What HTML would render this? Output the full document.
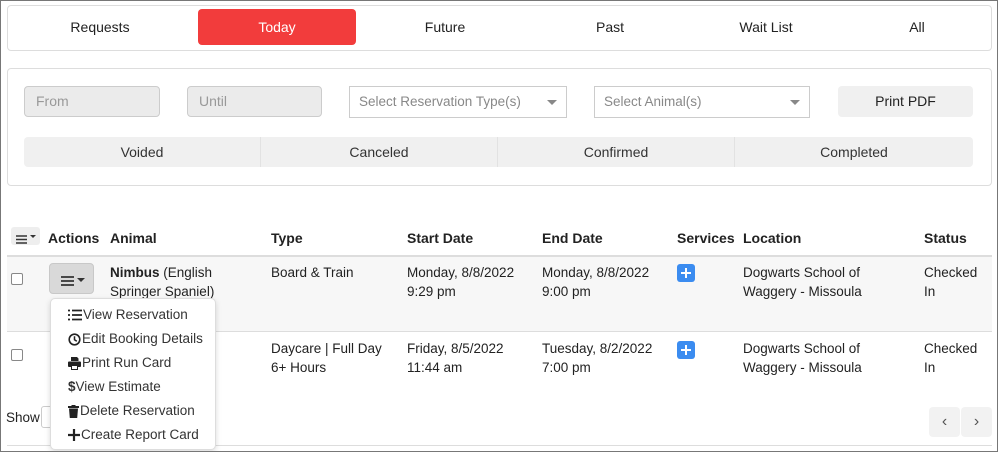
<!DOCTYPE html>
<html><head><style>
*{box-sizing:border-box;margin:0;padding:0}
body{width:998px;height:452px;overflow:hidden;background:#fff;font-family:"Liberation Sans",sans-serif;font-size:13.5px;color:#222;position:relative}
.frame{position:absolute;left:0;top:0;width:998px;height:452px;border:1px solid #777;pointer-events:none;z-index:9}
.a{position:absolute}
.card{position:absolute;border:1px solid #ddd;border-radius:4px;background:#fff}
.tab{position:absolute;top:9px;height:36px;line-height:36px;text-align:center;font-size:14px;color:#222}
.inp{position:absolute;top:86px;height:31px;border:1px solid #ccc;border-radius:4px;background:#ebebeb;color:#999;line-height:29px;padding-left:11px;font-size:14px}
.sel{position:absolute;top:86px;height:32px;border:1px solid #ccc;background:#fff;color:#888;line-height:30px;padding-left:9px;font-size:13.5px}
.sel:after{content:"";position:absolute;right:9px;top:13px;border-left:5px solid transparent;border-right:5px solid transparent;border-top:5px solid #888}
.seg{position:absolute;top:137px;height:30px;line-height:30px;text-align:center;background:#f0f0f0;font-size:14px;color:#333;border-right:1px solid #e2e2e2}
.th{position:absolute;top:230px;font-weight:bold;font-size:14px}
.td{position:absolute;line-height:19px;font-size:13.5px}
.cb{position:absolute;left:11px;width:12px;height:12px;border:1px solid #888;border-radius:2px;background:#fff}
.plus{position:absolute;left:677px;width:18px;height:18px;background:#3b8cf0;border-radius:3px}
.plus:before{content:"";position:absolute;left:4px;top:8px;width:10px;height:2px;background:#fff}
.plus:after{content:"";position:absolute;left:8px;top:4px;width:2px;height:10px;background:#fff}
.menu{position:absolute;left:50px;top:298px;width:166px;height:152px;background:#fff;border:1px solid #ddd;border-radius:5px;box-shadow:0 2px 6px rgba(0,0,0,.15);z-index:5}
.mi{position:absolute;left:17px;font-size:13.5px;color:#333;line-height:18px;display:flex;align-items:center}
.mi svg{margin-right:1px}
.car{display:inline-block;border-left:3px solid transparent;border-right:3px solid transparent;border-top:3px solid #333;vertical-align:middle;margin-left:2px}
</style></head><body>
<div class="frame"></div>
<div class="card" style="left:7px;top:5px;width:985px;height:46px"></div>
<div class="tab" style="left:30px;width:140px">Requests</div>
<div class="tab" style="left:198px;width:158px;background:#f23c3c;color:#fff;border-radius:4px">Today</div>
<div class="tab" style="left:375px;width:140px">Future</div>
<div class="tab" style="left:540px;width:140px">Past</div>
<div class="tab" style="left:696px;width:140px">Wait List</div>
<div class="tab" style="left:847px;width:140px">All</div>

<div class="card" style="left:7px;top:68px;width:985px;height:118px"></div>
<div class="inp" style="left:24px;width:136px">From</div>
<div class="inp" style="left:187px;width:135px">Until</div>
<div class="sel" style="left:349px;width:218px">Select Reservation Type(s)</div>
<div class="sel" style="left:594px;width:216px">Select Animal(s)</div>
<div class="a" style="left:838px;top:86px;width:135px;height:31px;background:#f0f0f0;border-radius:4px;text-align:center;line-height:31px;font-size:14px">Print PDF</div>
<div class="seg" style="left:24px;width:237px;border-radius:4px 0 0 4px">Voided</div>
<div class="seg" style="left:261px;width:237px">Canceled</div>
<div class="seg" style="left:498px;width:237px">Confirmed</div>
<div class="seg" style="left:735px;width:238px;border-radius:0 4px 4px 0;border-right:none">Completed</div>

<div class="a" style="left:11px;top:227px;width:29px;height:18px;background:#eee;border-radius:3px;padding:5px 0 0 5px"><svg width="12" height="9" viewBox="0 0 12 9"><path d="M0 1h11M0 4.5h11M0 8h11" stroke="#333" stroke-width="1.6"/></svg><span class="car" style="vertical-align:top;margin-top:3px"></span></div>
<div class="th" style="left:48px">Actions</div>
<div class="th" style="left:110px">Animal</div>
<div class="th" style="left:271px">Type</div>
<div class="th" style="left:407px">Start Date</div>
<div class="th" style="left:542px">End Date</div>
<div class="th" style="left:677px">Services</div>
<div class="th" style="left:743px">Location</div>
<div class="th" style="left:924px">Status</div>
<div class="a" style="left:7px;top:255px;width:985px;height:77px;background:#f7f7f7;border-top:2px solid #ddd;border-bottom:1px solid #ddd"></div>

<div class="cb" style="top:273px"></div>
<div class="a" style="left:49px;top:263px;width:45px;height:31px;background:#d9d9d9;border:1px solid #c8c8c8;border-radius:4px;padding:10px 0 0 11px"><svg width="14" height="10" viewBox="0 0 14 10"><path d="M0 1h13M0 5h13M0 9h13" stroke="#333" stroke-width="1.8"/></svg><span class="car" style="vertical-align:top;margin-top:4px;border-width:4px 4px 0 4px"></span></div>
<div class="td" style="left:110px;top:263px"><b>Nimbus</b> (English<br>Springer Spaniel)</div>
<div class="td" style="left:271px;top:263px">Board &amp; Train</div>
<div class="td" style="left:407px;top:263px">Monday, 8/8/2022<br>9:29 pm</div>
<div class="td" style="left:542px;top:263px">Monday, 8/8/2022<br>9:00 pm</div>
<div class="plus" style="top:264px"></div>
<div class="td" style="left:743px;top:263px">Dogwarts School of<br>Waggery - Missoula</div>
<div class="td" style="left:924px;top:263px">Checked<br>In</div>

<div class="cb" style="top:349px"></div>
<div class="td" style="left:271px;top:339px">Daycare | Full Day<br>6+ Hours</div>
<div class="td" style="left:407px;top:339px">Friday, 8/5/2022<br>11:44 am</div>
<div class="td" style="left:542px;top:339px">Tuesday, 8/2/2022<br>7:00 pm</div>
<div class="plus" style="top:341px"></div>
<div class="td" style="left:743px;top:339px">Dogwarts School of<br>Waggery - Missoula</div>
<div class="td" style="left:924px;top:339px">Checked<br>In</div>

<div class="td" style="left:6px;top:408px">Show</div>
<div class="a" style="left:41px;top:406px;width:14px;height:22px;border:1px solid #ccc;border-radius:3px"></div>
<div class="a" style="left:929px;top:407px;width:31px;height:30px;background:#f2f2f2;border-radius:4px;text-align:center;line-height:30px;color:#555;font-size:16px">‹</div>
<div class="a" style="left:961px;top:407px;width:31px;height:30px;background:#f2f2f2;border-radius:4px;text-align:center;line-height:30px;color:#555;font-size:16px">›</div>
<div class="a" style="left:7px;top:445px;width:985px;height:1px;background:#ddd"></div>

<div class="menu">
<div class="mi" style="top:7px"><svg width="14" height="12" viewBox="0 0 14 12"><path d="M0 1.5h2M0 6h2M0 10.5h2M4 1.5h10M4 6h10M4 10.5h10" stroke="#222" stroke-width="1.8"/></svg>View Reservation</div>
<div class="mi" style="top:31px"><svg width="13" height="13" viewBox="0 0 13 13"><circle cx="6.5" cy="6.5" r="5.3" fill="none" stroke="#222" stroke-width="1.6"/><path d="M6.5 3.2v3.5l2.3 1.6" fill="none" stroke="#222" stroke-width="1.5"/></svg>Edit Booking Details</div>
<div class="mi" style="top:55px"><svg width="13" height="13" viewBox="0 0 13 13"><path d="M3 0h6l1.5 1.5V4H3z" fill="#222"/><rect x="0" y="4.5" width="13" height="5.5" rx="1" fill="#222"/><rect x="3" y="8" width="7" height="5" fill="#222"/><rect x="4" y="9" width="5" height="3" fill="#fff"/></svg>Print Run Card</div>
<div class="mi" style="top:79px"><b>$</b>View Estimate</div>
<div class="mi" style="top:103px"><svg width="11" height="13" viewBox="0 0 11 13"><rect x="0" y="1" width="11" height="2" fill="#222"/><rect x="3.5" y="0" width="4" height="1.5" fill="#222"/><path d="M1 3.5h9l-0.8 9.5H1.8z" fill="#222"/></svg>Delete Reservation</div>
<div class="mi" style="top:127px"><svg width="12" height="12" viewBox="0 0 12 12"><path d="M6 0v12M0 6h12" stroke="#222" stroke-width="2.2"/></svg>Create Report Card</div>
</div>
</body></html>
